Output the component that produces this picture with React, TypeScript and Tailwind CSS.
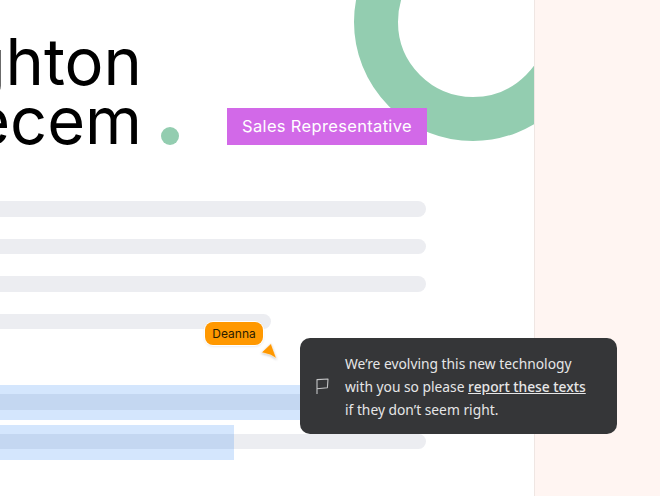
import React from "react";

const BAR_ROWS = [
  { id: "row-1", width: "w-full" },
  { id: "row-2", width: "w-full" },
  { id: "row-3", width: "w-full" },
  { id: "row-4", width: "w-[271px]" },
];

function FlagIcon() {
  return (
    <svg width="13" height="16" viewBox="0 0 13 16" fill="none" stroke="#c4c5c6" strokeWidth="1.1">
      <path d="M1 16V1.6L12 1L11.4 9.8L1 10.8" strokeLinejoin="round" />
    </svg>
  );
}

function CursorArrow() {
  return (
    <svg width="20" height="18" viewBox="0 0 20 18" className="absolute left-[260px] top-[342px] drop-shadow-[0_1px_1px_rgba(0,0,0,0.2)]">
      <path d="M1.5 10.5L11 1.5L16.5 16.5L10.5 13Z" fill="#ff9800" stroke="#ffffff" strokeWidth="0.6" strokeLinejoin="round" />
    </svg>
  );
}

export default function App() {
  return (
    <div className="relative flex h-[496px] w-[660px] overflow-hidden bg-white font-['Noto_Sans',sans-serif]">
      {/* Page being edited */}
      <div className="relative h-full w-[534px] shrink-0 overflow-hidden pr-[108px]">
        <div className="absolute left-[354px] top-[-97px] h-[238px] w-[238px] rounded-full border-[44px] border-[#93cdb0]" />

        <div className="relative flex h-[145px] items-end">
          <h1 className="-mb-[5px] flex w-[142px] shrink-0 flex-col items-end font-['Inter',sans-serif] text-[65px] font-normal leading-[59px] text-black">
            <span className="whitespace-nowrap">ghton</span>
            <span className="whitespace-nowrap">ecem</span>
          </h1>
          <span className="ml-[19px] h-[18px] w-[18px] shrink-0 rounded-full bg-[#93cdb0]" />
          <div className="ml-[48px] flex h-[37px] w-[200px] shrink-0 items-center justify-center bg-[#d269e8] font-['Inter',sans-serif] text-[16.5px] tracking-[0.02em] text-white">
            Sales Representative
          </div>
        </div>

        <div className="mt-[56px] flex flex-col gap-[22px]">
          {BAR_ROWS.map((row) => (
            <div key={row.id} className={`h-[15.5px] rounded-r-full bg-[#ecedf1] ${row.width}`} />
          ))}
        </div>

        <div className="mt-[65px] flex flex-col gap-[24px]">
          <div className="relative h-[15.5px] w-full rounded-r-full bg-[#ecedf1]">
            <div className="absolute -top-[9px] left-0 h-[35px] w-[300px] bg-[#2a80f5]/20" />
          </div>
          <div className="relative h-[15.5px] w-full rounded-r-full bg-[#ecedf1]">
            <div className="absolute -top-[9px] left-0 h-[35px] w-[234px] bg-[#2a80f5]/20" />
          </div>
        </div>
      </div>

      {/* Side panel */}
      <div className="h-full flex-1 border-l border-[#efe6e3] bg-[#fff5f2]" />

      {/* Collaborator cursor */}
      <div className="absolute left-[205px] top-[322px] flex h-[23px] w-[58px] items-center justify-center rounded-[8px] bg-[#ff9800] font-['Inter',sans-serif] text-[12px] text-[#2b1d00] shadow-[0_0_0_1px_#ffffff,0_1px_3px_rgba(0,0,0,0.15)]">
        Deanna
      </div>
      <CursorArrow />

      {/* Feedback tooltip */}
      <div className="absolute left-[300px] top-[338px] flex h-[96px] w-[317px] items-center rounded-[10px] bg-[#353638] text-[13.8px] leading-[23px] text-[#e6e6e7]">
        <div className="flex w-[45px] shrink-0 justify-center">
          <FlagIcon />
        </div>
        <p className="pt-[1px]">
          We’re evolving this new technology
          <br />
          with you so please <span className="font-medium underline">report these texts</span>
          <br />
          if they don’t seem right.
        </p>
      </div>
    </div>
  );
}
